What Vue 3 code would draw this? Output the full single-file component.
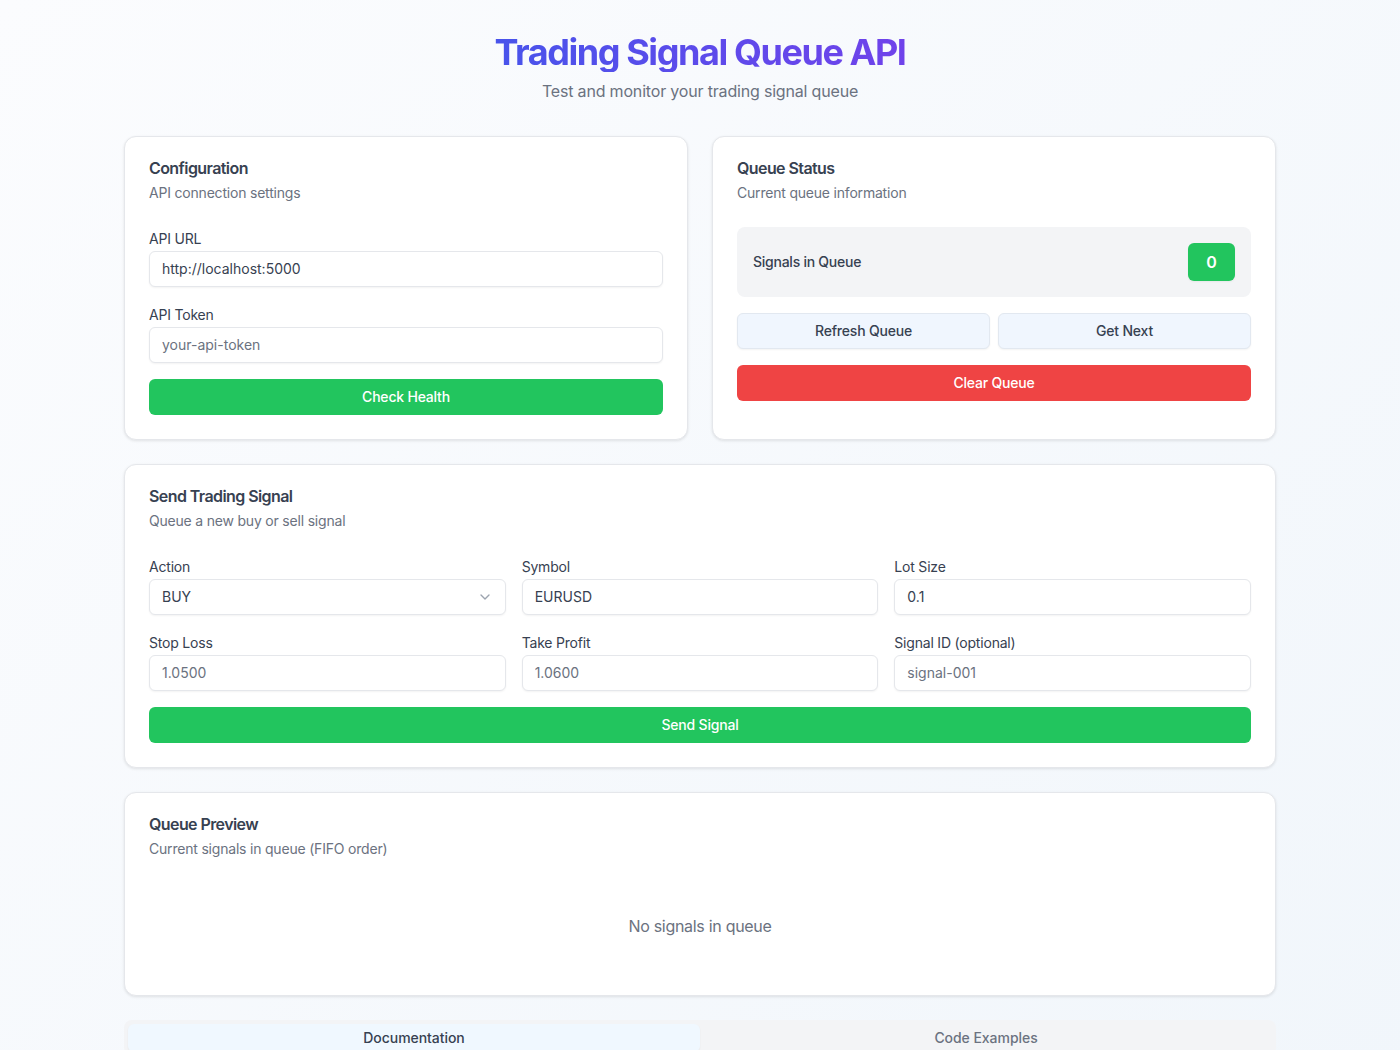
<template>
  <div class="page">
    <header class="hero">
      <h1>Trading Signal Queue API</h1>
      <p>Test and monitor your trading signal queue</p>
    </header>

    <div class="two-col">
      <section class="card">
        <h2>Configuration</h2>
        <p class="sub">API connection settings</p>
        <div class="stack">
          <div class="field">
            <label>API URL</label>
            <input type="text" value="http://localhost:5000">
          </div>
          <div class="field">
            <label>API Token</label>
            <input type="text" placeholder="your-api-token">
          </div>
          <button class="btn green">Check Health</button>
        </div>
      </section>

      <section class="card">
        <h2>Queue Status</h2>
        <p class="sub">Current queue information</p>
        <div class="stack">
          <div class="count-box">
            <span class="count-label">Signals in Queue</span>
            <span class="count">{{ queue.length }}</span>
          </div>
          <div class="btn-row">
            <button class="btn light">Refresh Queue</button>
            <button class="btn light">Get Next</button>
          </div>
          <button class="btn red">Clear Queue</button>
        </div>
      </section>
    </div>

    <section class="card">
      <h2>Send Trading Signal</h2>
      <p class="sub">Queue a new buy or sell signal</p>
      <div class="stack">
        <div class="grid">
          <div class="field">
            <label>Action</label>
            <div class="select">
              <span>BUY</span>
              <svg width="16" height="16" viewBox="0 0 24 24" fill="none" stroke="currentColor" stroke-width="2" stroke-linecap="round" stroke-linejoin="round"><path d="m6 9 6 6 6-6"/></svg>
            </div>
          </div>
          <div class="field" v-for="f in fields" :key="f.label">
            <label>{{ f.label }}</label>
            <input type="text" :value="f.value" :placeholder="f.placeholder">
          </div>
        </div>
        <button class="btn green">Send Signal</button>
      </div>
    </section>

    <section class="card">
      <h2>Queue Preview</h2>
      <p class="sub">Current signals in queue (FIFO order)</p>
      <p class="empty">No signals in queue</p>
    </section>

    <div class="tabs">
      <button class="tab active">Documentation</button>
      <button class="tab">Code Examples</button>
    </div>
  </div>
</template>

<script setup>
import { ref } from 'vue'

const queue = ref([])

const fields = [
  { label: 'Symbol', value: 'EURUSD' },
  { label: 'Lot Size', value: '0.1' },
  { label: 'Stop Loss', placeholder: '1.0500' },
  { label: 'Take Profit', placeholder: '1.0600' },
  { label: 'Signal ID (optional)', placeholder: 'signal-001' },
]
</script>

<style>
html, body {
  margin: 0;
}
body {
  min-height: 1050px;
  background: linear-gradient(135deg, #fbfcfe 0%, #f1f6fb 100%);
  font-family: Inter, "Liberation Sans", sans-serif;
}
</style>

<style scoped>
.page {
  box-sizing: border-box;
  width: 1200px;
  margin: 0 auto;
  padding: 32px 24px;
  display: flex;
  flex-direction: column;
  gap: 24px;
  letter-spacing: -0.2px;
  color: #374151;
}
.hero {
  text-align: center;
  margin-bottom: 8px;
}
h1 {
  margin: 0 0 8px;
  font-size: 36px;
  line-height: 40px;
  font-weight: 700;
  letter-spacing: -1.43px;
  background: linear-gradient(90deg, #2563eb, #9333ea);
  -webkit-background-clip: text;
  background-clip: text;
  color: transparent;
}
.hero p {
  margin: 0;
  font-size: 16px;
  line-height: 23px;
  letter-spacing: -0.18px;
  color: #6b7280;
}
.two-col {
  display: grid;
  grid-template-columns: 1fr 1fr;
  gap: 24px;
}
.hero + .two-col {
  margin-top: 1px;
}
.card {
  box-sizing: border-box;
  padding: 24px;
  background: #fff;
  border: 1px solid #e5e7eb;
  border-radius: 12px;
  box-shadow: 0 1px 3px rgba(0, 0, 0, 0.1);
}
h2 {
  margin: 0;
  font-size: 16px;
  line-height: 14px;
  font-weight: 600;
  letter-spacing: -0.58px;
  color: #374151;
}
.sub {
  margin: 8px 0 0;
  font-size: 14px;
  line-height: 20px;
  letter-spacing: -0.2px;
  color: #6b7280;
}
.stack {
  margin-top: 24px;
  display: flex;
  flex-direction: column;
  gap: 16px;
}
.grid {
  display: grid;
  grid-template-columns: repeat(3, 1fr);
  gap: 16px;
}
label {
  display: block;
  font-size: 14px;
  line-height: 24px;
}
input, .select {
  box-sizing: border-box;
  display: flex;
  align-items: center;
  justify-content: space-between;
  width: 100%;
  height: 36px;
  padding: 0 12px 2px;
  background: #fff;
  border: 1px solid #e5e7eb;
  border-radius: 6px;
  box-shadow: 0 1px 2px rgba(0, 0, 0, 0.05);
  font: inherit;
  font-size: 14px;
  letter-spacing: 0;
  color: #374151;
  outline: none;
}
input::placeholder {
  color: #6b7280;
}
.select svg {
  color: #9ca3af;
  margin-top: 2px;
}
.btn {
  box-sizing: border-box;
  height: 36px;
  padding: 0 16px 2px;
  border: 0;
  border-radius: 6px;
  font: inherit;
  font-size: 14px;
  font-weight: 500;
  letter-spacing: -0.2px;
  cursor: pointer;
}
.green {
  background: #22c55e;
  color: #fff;
}
.red {
  background: #ef4444;
  color: #fff;
}
.light {
  background: #f0f6fe;
  border: 1px solid #e2e8f0;
  box-shadow: 0 1px 2px rgba(0, 0, 0, 0.05);
  color: #374151;
}
.btn-row {
  display: grid;
  grid-template-columns: 1fr 1fr;
  gap: 8px;
}
.count-box {
  display: flex;
  align-items: center;
  justify-content: space-between;
  padding: 16px;
  background: #f3f4f6;
  border-radius: 8px;
  font-size: 14px;
  font-weight: 500;
}
.count-label {
  padding-bottom: 2px;
  letter-spacing: -0.25px;
}
.count {
  width: 47px;
  height: 38px;
  display: flex;
  align-items: center;
  justify-content: center;
  background: #22c55e;
  border-radius: 6px;
  box-shadow: 0 1px 2px rgba(0, 0, 0, 0.05);
  color: #fff;
  font-size: 16px;
  font-weight: 600;
}
.empty {
  margin: 24px 0 0;
  padding: 31px 0 33px;
  text-align: center;
  font-size: 16px;
  line-height: 24px;
  letter-spacing: -0.3px;
  color: #6b7280;
}
.tabs {
  display: grid;
  grid-template-columns: 1fr 1fr;
  padding: 4px;
  background: #f3f4f6;
  border-radius: 8px;
}
.tab {
  height: 28px;
  padding: 0 0 2px;
  border: 0;
  border-radius: 6px;
  background: transparent;
  font: inherit;
  font-size: 14px;
  font-weight: 500;
  letter-spacing: -0.05px;
  color: #6b7280;
}
.tab.active {
  background: #f0f8ff;
  color: #374151;
  box-shadow: 0 1px 2px rgba(0, 0, 0, 0.05);
}
</style>
